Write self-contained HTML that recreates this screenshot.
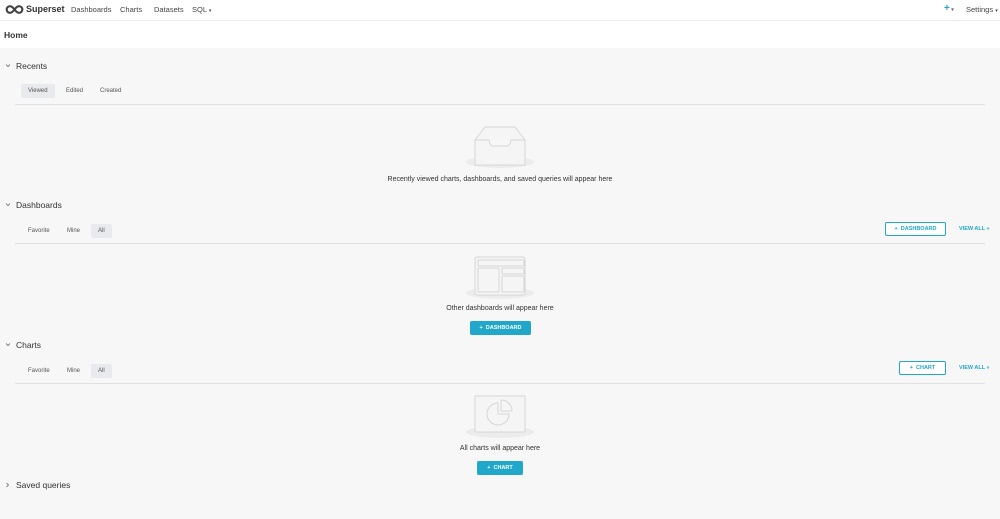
<!DOCTYPE html>
<html><head><meta charset="utf-8"><style>
*{margin:0;padding:0;box-sizing:border-box}
body{width:1000px;height:519px;overflow:hidden;background:#f7f7f7;font-family:"Liberation Sans",sans-serif;color:#333;position:relative}
.a{position:absolute;white-space:nowrap}
.nav{top:0;left:0;width:1000px;height:21px;background:#fff;border-bottom:1px solid #eee}
.home{top:21px;left:0;width:1000px;height:27px;background:#fff}
.navt{font-size:7.5px;color:#444;top:5px}
.sec{font-size:8.5px;color:#333}
.tab{font-size:6px;color:#555;padding:4px 7px;border-radius:2px}
.tab.on{background:#e8eaee}
.hr{height:1px;background:#e0e0e0;left:15px;width:970px}
.msg{font-size:7px;color:#333;width:1000px;text-align:center;left:0}
.btn,.obtn{display:flex;align-items:center;justify-content:center;font-size:5.5px;font-weight:bold;border-radius:2px;height:14px}
.btn{background:#20a7c9;color:#fff}
.obtn{border:1px solid #20a7c9;color:#20a7c9;background:#fff}
.va{font-size:5.5px;font-weight:bold;color:#20a7c9}
</style></head><body>
<div class="a nav"></div>
<div class="a home"></div>
<svg class="a" style="left:5px;top:5px" width="19" height="9" viewBox="0 0 20 10"><path d="M5 1.3a3.7 3.7 0 1 0 0 7.4c2.4 0 3.8-2.3 5-3.7s2.6-3.7 5-3.7a3.7 3.7 0 1 1 0 7.4c-2.4 0-3.8-2.3-5-3.7S7.4 1.3 5 1.3z" fill="none" stroke="#444" stroke-width="2.4"/></svg>
<div class="a" style="left:26px;top:4px;font-size:9px;font-weight:bold;color:#333">Superset</div>
<div class="a navt" style="left:71px">Dashboards</div>
<div class="a navt" style="left:120px">Charts</div>
<div class="a navt" style="left:154px">Datasets</div>
<div class="a navt" style="left:192px">SQL <span style="font-size:5px">▾</span></div>
<div class="a" style="left:944px;top:3px;font-size:10px;color:#20a7c9;font-weight:bold">+<span style="font-size:5px;color:#666"> ▾</span></div>
<div class="a navt" style="left:966px">Settings <span style="font-size:5px">▾</span></div>
<div class="a" style="left:4px;top:30px;font-size:8.5px;font-weight:bold;color:#333">Home</div>

<svg class="a" style="left:5px;top:63px" width="6" height="5" viewBox="0 0 6 5"><path d="M1 1.5 L3 3.5 L5 1.5" fill="none" stroke="#666" stroke-width="0.8"/></svg>
<div class="a sec" style="left:16px;top:61px">Recents</div>
<div class="a tab on" style="left:21px;top:84px">Viewed</div>
<div class="a tab" style="left:59px;top:84px">Edited</div>
<div class="a tab" style="left:93px;top:84px">Created</div>
<div class="a hr" style="top:104px"></div>
<svg class="a" style="left:465px;top:125px" width="70" height="45" viewBox="0 0 70 45"><ellipse cx="35" cy="37" rx="34" ry="6" fill="#ececec"/><path d="M10 15 L20 2 H50 L60 15 V40 H10 Z M10 15 H24 Q25 21 28 21 H42 Q45 21 46 15 H60" fill="#f5f5f5" stroke="#d6d6d6" stroke-width="1"/></svg>
<div class="a msg" style="top:176px">Recently viewed charts, dashboards, and saved queries will appear here</div>

<svg class="a" style="left:5px;top:202px" width="6" height="5" viewBox="0 0 6 5"><path d="M1 1.5 L3 3.5 L5 1.5" fill="none" stroke="#666" stroke-width="0.8"/></svg>
<div class="a sec" style="left:16px;top:200px">Dashboards</div>
<div class="a tab" style="left:21px;top:224px">Favorite</div>
<div class="a tab" style="left:60px;top:224px">Mine</div>
<div class="a tab on" style="left:91px;top:224px">All</div>
<div class="a obtn" style="left:885px;top:222px;width:61px">+&nbsp; DASHBOARD</div>
<div class="a va" style="left:959px;top:226px">VIEW ALL »</div>
<div class="a hr" style="top:243px"></div>
<svg class="a" style="left:465px;top:255px" width="70" height="45" viewBox="0 0 70 45"><ellipse cx="35" cy="38" rx="34" ry="6" fill="#ececec"/><rect x="10" y="2" width="50" height="38" rx="2" fill="#f5f5f5" stroke="#d6d6d6"/><rect x="13" y="5" width="46" height="6" rx="1" fill="none" stroke="#d6d6d6"/><rect x="13" y="13" width="21" height="24" rx="1" fill="none" stroke="#d6d6d6"/><rect x="37" y="13" width="22" height="6" rx="1" fill="none" stroke="#d6d6d6"/><rect x="37" y="21" width="22" height="16" rx="1" fill="none" stroke="#d6d6d6"/></svg>
<div class="a msg" style="top:305px">Other dashboards will appear here</div>
<div class="a btn" style="left:470px;top:321px;width:61px">+&nbsp; DASHBOARD</div>

<svg class="a" style="left:5px;top:342px" width="6" height="5" viewBox="0 0 6 5"><path d="M1 1.5 L3 3.5 L5 1.5" fill="none" stroke="#666" stroke-width="0.8"/></svg>
<div class="a sec" style="left:16px;top:340px">Charts</div>
<div class="a tab" style="left:21px;top:364px">Favorite</div>
<div class="a tab" style="left:60px;top:364px">Mine</div>
<div class="a tab on" style="left:91px;top:364px">All</div>
<div class="a obtn" style="left:899px;top:361px;width:47px">+&nbsp; CHART</div>
<div class="a va" style="left:959px;top:365px">VIEW ALL »</div>
<div class="a hr" style="top:383px"></div>
<svg class="a" style="left:465px;top:394px" width="70" height="45" viewBox="0 0 70 45"><ellipse cx="35" cy="38" rx="34" ry="6" fill="#ececec"/><rect x="10" y="2" width="50" height="36" rx="1" fill="#f5f5f5" stroke="#d6d6d6"/><path d="M33 9 A11 11 0 1 0 44 20 H33 Z" fill="none" stroke="#d6d6d6"/><path d="M36 6 A11 11 0 0 1 47 17 H36 Z" fill="none" stroke="#d6d6d6"/></svg>
<div class="a msg" style="top:445px">All charts will appear here</div>
<div class="a btn" style="left:477px;top:461px;width:46px">+&nbsp; CHART</div>

<svg class="a" style="left:5px;top:482px" width="5" height="6" viewBox="0 0 5 6"><path d="M1.5 1 L3.5 3 L1.5 5" fill="none" stroke="#666" stroke-width="0.8"/></svg>
<div class="a sec" style="left:16px;top:480px">Saved queries</div>
</body></html>
